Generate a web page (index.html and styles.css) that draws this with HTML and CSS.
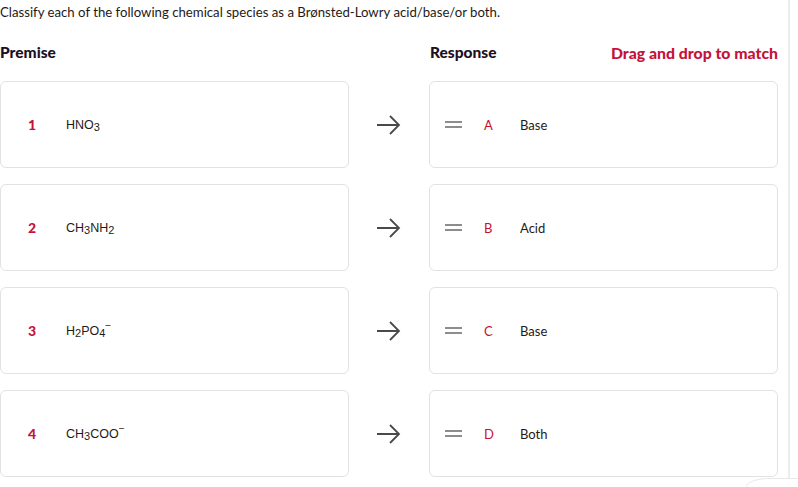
FILE: index.html
```html
<!DOCTYPE html>
<html lang="en">

    <head>
        <meta charset="UTF-8">
        <meta name="viewport"
            content="width=device-width,initial-scale=1.0">
        <title>Matching</title>
        <link rel="stylesheet" href="styles.css">
    </head>

    <body>
        <div class="page">
            <p class="question">Classify each of the following chemical species as a Brønsted-Lowry acid/base/or both.</p>
            <div class="heads">
                <div class="head">Premise</div>
                <div class="head response-head">Response</div>
                <div class="hint">Drag and drop to match</div>
            </div>
            <div class="rows">
                <div class="row">
                    <div class="card premise"><span class="num">1</span><span class="chem">HNO<sub>3</sub></span></div>
                    <div class="arrow"><svg width="26" height="22" viewBox="0 0 26 22"><path d="M1 11 H23 M14 2 L23 11 L14 20" fill="none" stroke="#4a4a4a" stroke-width="1.8"/></svg></div>
                    <div class="card answer"><span class="grip"></span><span class="letter">A</span><span class="label">Base</span></div>
                </div>
                <div class="row">
                    <div class="card premise"><span class="num">2</span><span class="chem">CH<sub>3</sub>NH<sub>2</sub></span></div>
                    <div class="arrow"><svg width="26" height="22" viewBox="0 0 26 22"><path d="M1 11 H23 M14 2 L23 11 L14 20" fill="none" stroke="#4a4a4a" stroke-width="1.8"/></svg></div>
                    <div class="card answer"><span class="grip"></span><span class="letter">B</span><span class="label">Acid</span></div>
                </div>
                <div class="row">
                    <div class="card premise"><span class="num">3</span><span class="chem">H<sub>2</sub>PO<sub>4</sub><sup>&#8722;</sup></span></div>
                    <div class="arrow"><svg width="26" height="22" viewBox="0 0 26 22"><path d="M1 11 H23 M14 2 L23 11 L14 20" fill="none" stroke="#4a4a4a" stroke-width="1.8"/></svg></div>
                    <div class="card answer"><span class="grip"></span><span class="letter">C</span><span class="label">Base</span></div>
                </div>
                <div class="row">
                    <div class="card premise"><span class="num">4</span><span class="chem">CH<sub>3</sub>COO<sup>&#8722;</sup></span></div>
                    <div class="arrow"><svg width="26" height="22" viewBox="0 0 26 22"><path d="M1 11 H23 M14 2 L23 11 L14 20" fill="none" stroke="#4a4a4a" stroke-width="1.8"/></svg></div>
                    <div class="card answer"><span class="grip"></span><span class="letter">D</span><span class="label">Both</span></div>
                </div>
            </div>
        </div>
        <div class="edge"></div>
        <div class="bubble"></div>
    </body>

</html>
```

FILE: styles.css
```css
* {
    margin: 0;
    padding: 0;
    box-sizing: border-box;
}

body {
    width: 100vw;
    height: 100vh;
    background-color: #fff;
    overflow: hidden;
    font-family: Lato, "Noto Sans", sans-serif;
    color: #1f1a17;
}

.page {
    width: 779px;
}

.question {
    font-size: 13.2px;
    line-height: 18px;
    padding-top: 3px;
    color: #1f1a17;
}

.heads {
    display: grid;
    grid-template-columns: 429px 1fr auto;
    margin-top: 21px;
    height: 20px;
    align-items: center;
}

.head {
    font-size: 15.5px;
    font-weight: 900;
    color: #1d0f22;
}

.response-head {
    padding-left: 1px;
}

.hint {
    font-size: 15.8px;
    font-weight: 900;
    color: #c4123b;
    padding-right: 1px;
}

.rows {
    display: flex;
    flex-direction: column;
    gap: 16px;
    margin-top: 19px;
}

.row {
    display: grid;
    grid-template-columns: 349px 80px 349px;
    height: 87px;
}

.card {
    display: flex;
    align-items: center;
    border: 1px solid #e4e2df;
    border-radius: 6px;
    font-size: 13px;
}

.premise {
    padding-left: 27px;
}

.num {
    width: 38px;
    font-size: 14px;
    font-weight: 900;
    color: #c4123b;
}

.chem {
    font-family: "Liberation Sans", Arial, sans-serif;
    font-size: 12.5px;
}

.chem sub {
    font-size: 11px;
    vertical-align: -2px;
    line-height: 0;
}

.chem sup {
    font-size: 10px;
    vertical-align: 6px;
    line-height: 0;
}

.arrow {
    display: flex;
    align-items: center;
    justify-content: center;
}

.answer {
    padding-left: 15px;
}

.grip {
    width: 17px;
    height: 7px;
    border-top: 2px solid #8d8d8d;
    border-bottom: 2px solid #8d8d8d;
    margin-right: 22px;
}

.letter {
    width: 36px;
    color: #c8102e;
}

.edge {
    position: absolute;
    top: 0;
    left: 788px;
    width: 2px;
    height: 100%;
    background: #ececec;
}

.bubble {
    position: absolute;
    left: 746px;
    top: 478px;
    width: 52px;
    height: 9px;
    border-top: 1px solid #e8e8e8;
    border-left: 1px solid #e8e8e8;
    border-top-left-radius: 40px 16px;
    background: #fff;
}
```
